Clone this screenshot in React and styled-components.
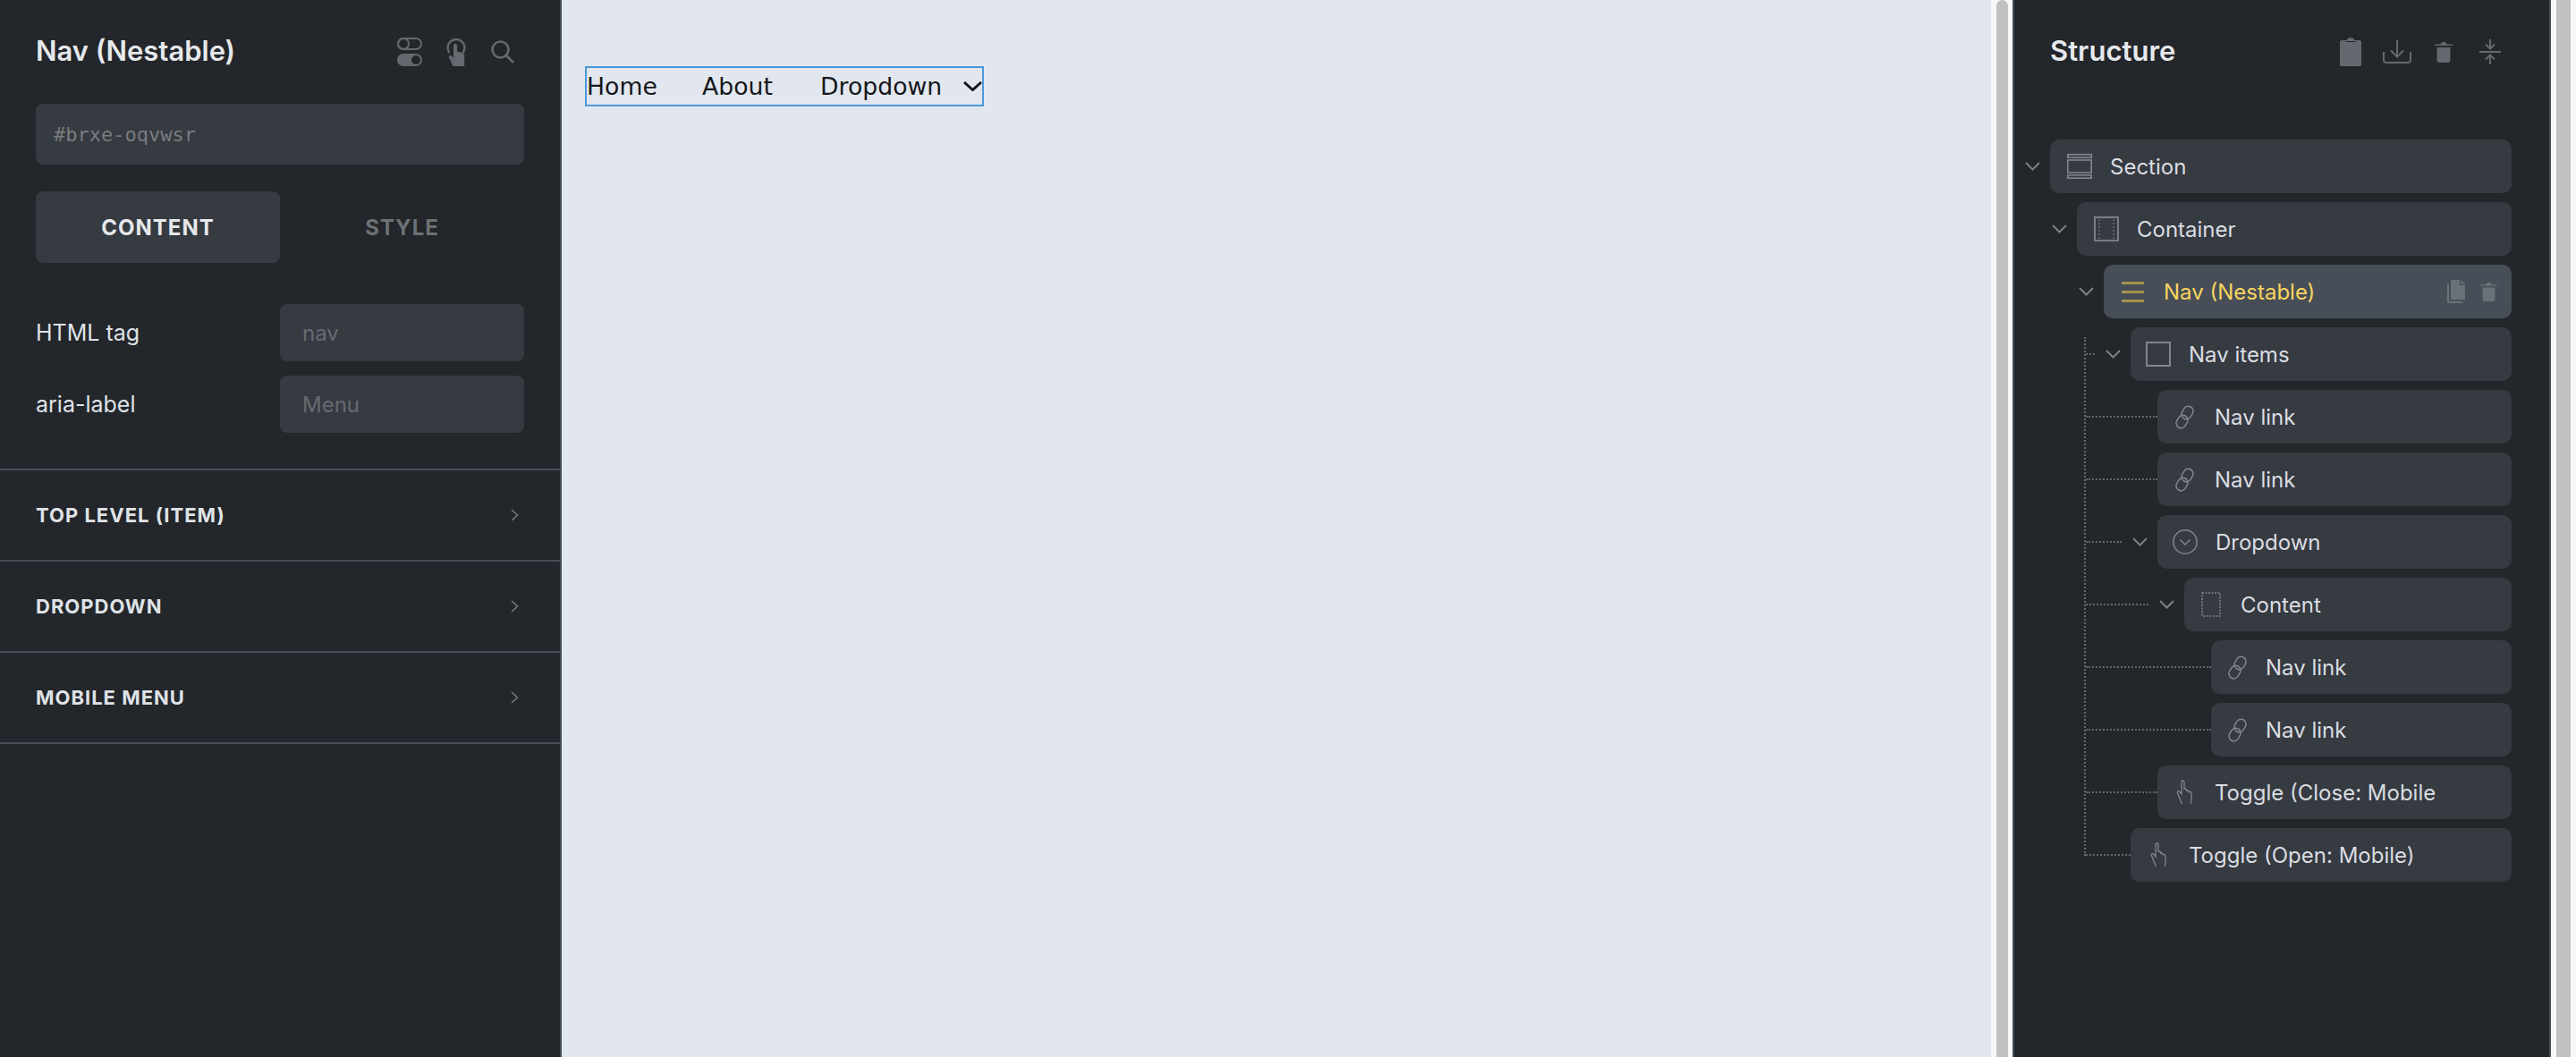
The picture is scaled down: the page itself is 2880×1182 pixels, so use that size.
import React from "react";
import styled, { createGlobalStyle } from "styled-components";

const GlobalStyle = createGlobalStyle`
  html, body {
    margin: 0;
    height: 100%;
    overflow: hidden;
    background: #e2e7ef;
    font-family: Inter, "Liberation Sans", sans-serif;
  }
  #root {
    height: 100%;
  }
`;

const Page = styled.div`
  display: flex;
  height: 1182px;
`;

const LeftPanel = styled.aside`
  flex: 0 0 628px;
  box-sizing: border-box;
  background: #23262a;
  border-right: 2px solid #454f59;
`;

const PanelHeader = styled.header`
  display: flex;
  align-items: center;
  justify-content: space-between;
  height: 116px;
  padding: 0 ${p => p.$right}px 0 ${p => p.$left}px;
  box-sizing: border-box;
`;

const PanelTitle = styled.h2`
  margin: 0 0 3px;
  font-size: 31px;
  font-weight: 600;
  color: #e6e9ec;
`;

const HeaderIcons = styled.div`
  display: flex;
`;

const IconBox = styled.span`
  display: flex;
  align-items: center;
  justify-content: center;
  width: 52px;
  color: #65696f;
`;

const Controls = styled.div`
  padding: 0 40px 40px;
`;

const IdField = styled.div`
  height: 68px;
  display: flex;
  align-items: center;
  padding-left: 20px;
  border-radius: 8px;
  background: #363a41;
  font-family: "DejaVu Sans Mono", monospace;
  font-size: 22px;
  color: #797c80;
`;

const Tabs = styled.div`
  display: grid;
  grid-template-columns: 1fr 1fr;
  margin: 30px 0 46px;
`;

const Tab = styled.div`
  height: 80px;
  display: flex;
  align-items: center;
  justify-content: center;
  border-radius: 8px;
  font-size: 24px;
  font-weight: 700;
  letter-spacing: 1px;
  background: ${p => (p.$active ? "#363a41" : "transparent")};
  color: ${p => (p.$active ? "#e6e9ec" : "#6d7176")};
`;

const ControlRow = styled.div`
  display: grid;
  grid-template-columns: 1fr 1fr;
  align-items: center;
  margin-top: 16px;
  font-size: 25px;
  color: #dfe3e7;
`;

const TextField = styled.div`
  height: 64px;
  display: flex;
  align-items: center;
  padding-left: 25px;
  border-radius: 8px;
  background: #363a41;
  font-size: 24px;
  color: #666a70;
`;

const Accordion = styled.div`
  height: 100px;
  display: flex;
  align-items: center;
  justify-content: space-between;
  padding: 0 46px 0 40px;
  border-top: 2px solid #454f59;
  font-size: 22px;
  font-weight: 700;
  letter-spacing: 1px;
  color: #dfe3e7;
  &:last-child {
    border-bottom: 2px solid #454f59;
  }
`;

const Canvas = styled.main`
  flex: 1;
  padding: 74px 26px;
`;

const NavPreview = styled.nav`
  display: inline-flex;
  align-items: center;
  box-sizing: border-box;
  width: 446px;
  height: 45px;
  border: 2px solid #4a98db;
  font-family: "DejaVu Sans", sans-serif;
  font-size: 26.7px;
  color: #15171a;
`;

const PreviewLink = styled.span`
  width: ${p => p.$width}px;
`;

const Scrollbar = styled.div`
  flex: 0 0 auto;
  box-sizing: border-box;
  width: ${p => p.$width}px;
  padding: 0 ${p => p.$end}px 0 ${p => p.$start}px;
  background: #f8f8f8;
`;

const ScrollThumb = styled.div`
  height: 100%;
  background: #c1c1c1;
  border-radius: ${p => (p.$rounded ? "7px 7px 0 0" : "0")};
`;

const RightPanel = styled.aside`
  flex: 0 0 602px;
  box-sizing: border-box;
  background: #23262a;
  border-left: 2px solid #454f59;
  border-right: 2px solid #454f59;
`;

const Tree = styled.div`
  position: relative;
  display: flex;
  flex-direction: column;
  gap: 10px;
  padding: 40px 42px 0 10px;
  &::before {
    content: "";
    position: absolute;
    left: 78px;
    top: 261px;
    height: 580px;
    border-left: 2px dotted #63676c;
  }
`;

const TreeLine = styled.div`
  position: relative;
  display: flex;
  align-items: center;
  padding-left: ${p => p.$depth * 30}px;
  &::before {
    content: "";
    display: ${p => (p.$connector > 0 ? "block" : "none")};
    position: absolute;
    left: 70px;
    top: 29px;
    width: ${p => p.$connector}px;
    border-top: 2px dotted #63676c;
  }
`;

const Caret = styled.span`
  flex: 0 0 30px;
  box-sizing: border-box;
  padding-left: 2px;
  display: flex;
  align-items: center;
  color: #7c8085;
`;

const Card = styled.div`
  flex: 1;
  height: 60px;
  display: flex;
  align-items: center;
  gap: 20px;
  padding: 0 16px 0 ${p => p.$inset}px;
  border-radius: 10px;
  background: ${p => (p.$active ? "#474e57" : "#363a41")};
  color: ${p => (p.$active ? "#f7d45f" : "#dadde1")};
  font-size: 24px;
  white-space: nowrap;
`;

const CardIcon = styled.span`
  flex: 0 0 ${p => p.$width}px;
  display: flex;
  align-items: center;
  justify-content: center;
  color: ${p => (p.$active ? "#a3944f" : "#83868b")};
`;

const CardActions = styled.span`
  margin-left: auto;
  display: flex;
  align-items: center;
  gap: 15px;
  color: #6b7179;
`;

const Chevron = () => (
  <svg width="17" height="10" viewBox="0 0 17 10" fill="none" stroke="currentColor" strokeWidth="2">
    <path d="M1 1l7.500 7.500L16 1" />
  </svg>
);

const ChevronRight = () => (
  <svg width="9" height="14" viewBox="0 0 9 14" fill="none" stroke="#74787d" strokeWidth="1.6">
    <path d="M1 1l6.5 6L1 13" />
  </svg>
);

const TogglesIcon = () => (
  <svg width="28" height="32" viewBox="0 0 28 32" fill="none" stroke="currentColor" strokeWidth="2">
    <rect x="1" y="1" width="26" height="12" rx="6" />
    <circle cx="7" cy="7" r="6" />
    <rect x="0" y="18" width="28" height="14" rx="7" fill="currentColor" stroke="none" />
    <circle cx="21" cy="25" r="5" fill="#23262a" stroke="none" />
  </svg>
);

const TapIcon = () => (
  <svg width="22" height="32" viewBox="0 0 22 32" fill="none">
    <path d="M3.5 17A9.4 9.4 0 1 1 18.5 17" stroke="currentColor" strokeWidth="2.4" />
    <path
      d="M8 9c0-2.6 4-2.6 4 0v6.5l6 1.6c1.4.4 2.2 1.4 2.2 2.8V32H7.5L3 22.5c-.9-2 1.4-3.4 2.8-1.8L8 22.5z"
      fill="currentColor"
    />
  </svg>
);

const SearchIcon = () => (
  <svg width="26" height="26" viewBox="0 0 26 26" fill="none" stroke="currentColor" strokeWidth="2.6">
    <circle cx="10.5" cy="10.5" r="9" />
    <path d="M17 17l8 8" />
  </svg>
);

const ClipboardIcon = () => (
  <svg width="24" height="32" viewBox="0 0 24 32" fill="currentColor">
    <path d="M2 3h5.5C8 1 10 0 12 0s4 1 4.500 3H22c1.100 0 2 .9 2 2v25c0 1.100-.9 2-2 2H2c-1.100 0-2-.9-2-2V5c0-1.100.9-2 2-2z" />
    <path d="M6.500 4.500h11" stroke="#23262a" strokeWidth="1" />
  </svg>
);

const DownloadIcon = () => (
  <svg width="32" height="26" viewBox="0 0 32 26" fill="none" stroke="currentColor" strokeWidth="2">
    <path d="M16 0v18M9 11.500l7 7 7-7" />
    <path d="M1 13v9c0 1.700 1.300 3 3 3h24c1.700 0 3-1.300 3-3v-9" />
  </svg>
);

const TrashIcon = ({ width = 20, height = 24 }) => (
  <svg width={width} height={height} viewBox="0 0 20 24" fill="currentColor">
    <path d="M0 3.500h6.500C7 1.500 8.500 1 10 1s3 .5 3.500 2.500H20V5H0z" />
    <path d="M2.500 7h15v14c0 1.700-1.300 3-3 3h-9c-1.700 0-3-1.300-3-3z" />
  </svg>
);

const CollapseIcon = () => (
  <svg width="24" height="28" viewBox="0 0 24 28" fill="none" stroke="currentColor" strokeWidth="2">
    <path d="M0 14h24M12 0v10M7 5.500l5 5 5-5M12 28V18M7 22.500l5-5 5 5" />
  </svg>
);

const CopyIcon = () => (
  <svg width="22" height="26" viewBox="0 0 22 26" fill="currentColor">
    <path d="M5 0h9v6h6v15c0 .6-.4 1-1 1H5c-.6 0-1-.4-1-1V1c0-.6.4-1 1-1z" />
    <path d="M15.500 0L20 4.500h-4.500z" />
    <path d="M0 5h2v19h15v2H2c-1.100 0-2-.9-2-2z" />
  </svg>
);

const SectionIcon = () => (
  <svg width="28" height="28" viewBox="0 0 28 28" fill="none" stroke="currentColor" strokeWidth="1.6">
    <rect x=".8" y=".8" width="26.400" height="3.400" />
    <rect x=".8" y="7" width="26.400" height="14" />
    <rect x=".8" y="23.800" width="26.400" height="3.400" />
  </svg>
);

const ContainerIcon = () => (
  <svg width="28" height="28" viewBox="0 0 28 28" fill="none" stroke="currentColor">
    <rect x="1" y="1" width="26" height="26" strokeWidth="1.800" />
    <path d="M6 3v22M22 3v22" strokeWidth="1" strokeDasharray="2 2" />
  </svg>
);

const MenuIcon = () => (
  <svg width="25" height="23" viewBox="0 0 25 23" fill="currentColor">
    <rect width="25" height="3" />
    <rect y="10" width="25" height="3" />
    <rect y="20" width="25" height="3" />
  </svg>
);

const SquareIcon = () => (
  <svg width="28" height="28" viewBox="0 0 28 28" fill="none" stroke="currentColor" strokeWidth="2">
    <rect x="1" y="1" width="26" height="26" />
  </svg>
);

const LinkIcon = () => (
  <svg width="21" height="27" viewBox="0 0 21 27" fill="none" stroke="currentColor" strokeWidth="1.500">
    <rect x="8" y="1" width="11" height="15" rx="5.500" transform="rotate(30 13.500 8.500)" />
    <rect x="2" y="11" width="11" height="15" rx="5.500" transform="rotate(30 7.500 18.500)" />
  </svg>
);

const CircleChevronIcon = () => (
  <svg width="28" height="28" viewBox="0 0 28 28" fill="none" stroke="currentColor" strokeWidth="1.500">
    <circle cx="14" cy="14" r="13.200" />
    <path d="M8.500 11.500l5.500 5.500 5.500-5.500" />
  </svg>
);

const DottedBoxIcon = () => (
  <svg width="22" height="28" viewBox="0 0 22 28" fill="none" stroke="currentColor" strokeWidth="1.500" strokeDasharray="2 1.500">
    <rect x="1" y="1" width="20" height="26" />
  </svg>
);

const HandIcon = () => (
  <svg width="20" height="28" viewBox="0 0 20 28" fill="none" stroke="currentColor" strokeWidth="1.300">
    <path d="M6.500 27L1.500 15c-.8-2 1.400-3.200 2.600-1.400L6 16V2.800c0-2.400 3-2.400 3 0V11c0-1.500 2.500-1.500 2.500 0v2c0-1.500 2.500-1.500 2.500 0v1.500c0-1.500 3-1.500 3 .5v7c0 2-.5 3.500-1 5" />
  </svg>
);

const treeRows = [
  { label: "Section", depth: 0, open: true, icon: <SectionIcon />, width: 29, inset: 18 },
  { label: "Container", depth: 1, open: true, icon: <ContainerIcon />, width: 29, inset: 18 },
  { label: "Nav (Nestable)", depth: 2, open: true, icon: <MenuIcon />, width: 30, inset: 17, active: true },
  { label: "Nav items", depth: 3, open: true, icon: <SquareIcon />, width: 28, inset: 17, line: true },
  { label: "Nav link", depth: 4, icon: <LinkIcon />, width: 27, inset: 17, line: true },
  { label: "Nav link", depth: 4, icon: <LinkIcon />, width: 27, inset: 17, line: true },
  { label: "Dropdown", depth: 4, open: true, icon: <CircleChevronIcon />, width: 27, inset: 17, line: true },
  { label: "Content", depth: 5, open: true, icon: <DottedBoxIcon />, width: 26, inset: 17, line: true },
  { label: "Nav link", depth: 6, icon: <LinkIcon />, width: 24, inset: 17, line: true },
  { label: "Nav link", depth: 6, icon: <LinkIcon />, width: 24, inset: 17, line: true },
  { label: "Toggle (Close: Mobile", depth: 4, icon: <HandIcon />, width: 27, inset: 17, line: true },
  { label: "Toggle (Open: Mobile)", depth: 3, icon: <HandIcon />, width: 27, inset: 18, line: true }
];

function StructureRow({ row }) {
  // the dotted line stops at the card, or short of the caret when there is one
  const connector = row.line ? row.depth * 30 - 40 - (row.open ? 40 : 0) : 0;
  return (
    <TreeLine $depth={row.depth} $connector={connector}>
      <Caret>{row.open && <Chevron />}</Caret>
      <Card $active={row.active} $inset={row.inset}>
        <CardIcon $width={row.width} $active={row.active}>
          {row.icon}
        </CardIcon>
        {row.label}
        {row.active && (
          <CardActions>
            <CopyIcon />
            <TrashIcon width={19} height={22} />
          </CardActions>
        )}
      </Card>
    </TreeLine>
  );
}

export default function App() {
  return (
    <>
      <GlobalStyle />
      <Page>
        <LeftPanel>
          <PanelHeader $left={40} $right={38}>
            <PanelTitle>Nav (Nestable)</PanelTitle>
            <HeaderIcons>
              <IconBox><TogglesIcon /></IconBox>
              <IconBox><TapIcon /></IconBox>
              <IconBox><SearchIcon /></IconBox>
            </HeaderIcons>
          </PanelHeader>
          <Controls>
            <IdField>#brxe-oqvwsr</IdField>
            <Tabs>
              <Tab $active>CONTENT</Tab>
              <Tab>STYLE</Tab>
            </Tabs>
            <ControlRow>
              HTML tag
              <TextField>nav</TextField>
            </ControlRow>
            <ControlRow>
              aria-label
              <TextField>Menu</TextField>
            </ControlRow>
          </Controls>
          <div>
            <Accordion>TOP LEVEL (ITEM)<ChevronRight /></Accordion>
            <Accordion>DROPDOWN<ChevronRight /></Accordion>
            <Accordion>MOBILE MENU<ChevronRight /></Accordion>
          </div>
        </LeftPanel>
        <Canvas>
          <NavPreview>
            <PreviewLink $width={129}>Home</PreviewLink>
            <PreviewLink $width={132}>About</PreviewLink>
            <PreviewLink $width={160}>Dropdown</PreviewLink>
            <svg width="21" height="11" viewBox="0 0 21 11" fill="none" stroke="#15171a" strokeWidth="3">
              <path d="M1 1l9.500 8.500L20 1" />
            </svg>
          </NavPreview>
        </Canvas>
        <Scrollbar $width={24} $start={6} $end={5}>
          <ScrollThumb $rounded />
        </Scrollbar>
        <RightPanel>
          <PanelHeader $left={40} $right={40}>
            <PanelTitle>Structure</PanelTitle>
            <HeaderIcons>
              <IconBox><ClipboardIcon /></IconBox>
              <IconBox><DownloadIcon /></IconBox>
              <IconBox><TrashIcon /></IconBox>
              <IconBox><CollapseIcon /></IconBox>
            </HeaderIcons>
          </PanelHeader>
          <Tree>
            {treeRows.map((row, i) => (
              <StructureRow key={i} row={row} />
            ))}
          </Tree>
        </RightPanel>
        <Scrollbar $width={28} $start={6} $end={6}>
          <ScrollThumb />
        </Scrollbar>
      </Page>
    </>
  );
}
